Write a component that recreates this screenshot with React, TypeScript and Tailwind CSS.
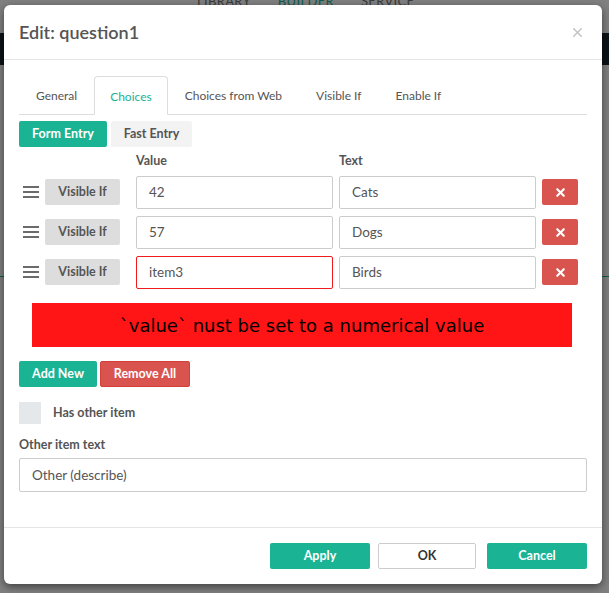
import { X } from 'lucide-react'

const rows = [
  { value: '42', text: 'Cats', error: false },
  { value: '57', text: 'Dogs', error: false },
  { value: 'item3', text: 'Birds', error: true },
]

const tabs = ['General', 'Choices', 'Choices from Web', 'Visible If', 'Enable If']

function Hamburger() {
  return (
    <svg width="16" height="14" viewBox="0 0 16 14" className="shrink-0">
      <rect x="0" y="1" width="16" height="2" fill="#6b6b6b" />
      <rect x="0" y="6" width="16" height="2" fill="#6b6b6b" />
      <rect x="0" y="11" width="16" height="2" fill="#6b6b6b" />
    </svg>
  )
}

export default function App() {
  return (
    <div
      className="relative w-[609px] h-[593px] overflow-hidden bg-[#808080]"
      style={{ fontFamily: 'Lato, "Open Sans", sans-serif' }}
    >
      {/* page behind the overlay */}
      <div className="flex gap-[27px] pl-[197px] -mt-[8px] text-[13px] text-[#3a3a3a] tracking-wide">
        <span>LIBRARY</span>
        <span className="text-[#0d5c4b]">BUILDER</span>
        <span>SERVICE</span>
      </div>
      <div className="mt-[21px] h-[32px] bg-[#0c1216]" />
      <div className="mt-[211px] h-[1px] bg-[#0d5c4b]" />

      {/* modal */}
      <div className="absolute left-[4px] top-[5px] w-[598px] h-[579px] bg-white rounded-[6px] shadow-[0_3px_9px_rgba(0,0,0,0.5)] flex flex-col">
        <div className="h-[55px] border-b border-[#e5e5e5] flex items-center justify-between pl-[15px] pr-[17px]">
          <h1 className="text-[18px] font-semibold text-[#555]">Edit: question1</h1>
          <X size={15} strokeWidth={2.5} className="text-[#c4c4c4]" />
        </div>

        <div className="px-[15px] flex-1">
          <div className="mt-[16px] flex border-b border-[#ddd] h-[39px] text-[12px] text-[#555]">
            {tabs.map((t) =>
              t === 'Choices' ? (
                <div
                  key={t}
                  className="px-[15px] pt-[2px] flex items-center border border-[#ddd] border-b-white -mb-px rounded-t-[4px] bg-white text-[#1ab394]"
                >
                  {t}
                </div>
              ) : (
                <div key={t} className="px-[17px] pt-[2px] flex items-center">
                  {t}
                </div>
              )
            )}
          </div>

          <div className="mt-[6px] flex gap-[4px]">
            <button className="h-[26px] w-[88px] bg-[#1ab394] text-white text-[12.5px] font-bold rounded-[2px]">
              Form Entry
            </button>
            <button className="h-[26px] w-[81px] bg-[#f3f3f3] text-[#555] text-[12.5px] font-bold rounded-[2px]">
              Fast Entry
            </button>
          </div>

          <div className="mt-[6px] flex text-[12.5px] font-bold text-[#555] h-[16px] items-center">
            <span className="ml-[117px] w-[203px]">Value</span>
            <span>Text</span>
          </div>

          <div className="mt-[7px] flex flex-col gap-[8px]">
            {rows.map((r) => (
              <div key={r.value} className="flex items-center h-[32px]">
                <div className="ml-[4px] mr-[6px]">
                  <Hamburger />
                </div>
                <button className="h-[26px] w-[75px] bg-[#dddddd] text-[#555] text-[12.5px] font-bold rounded-[2px]">
                  Visible If
                </button>
                <div
                  className={`ml-[16px] w-[197px] h-[33px] flex items-center px-[12px] text-[13.5px] text-[#555] border rounded-[2px] ${
                    r.error ? 'border-[#ee1c1c]' : 'border-[#ccc]'
                  }`}
                >
                  {r.value}
                </div>
                <div className="ml-[6px] w-[197px] h-[33px] flex items-center px-[12px] text-[13.5px] text-[#555] border border-[#ccc] rounded-[2px]">
                  {r.text}
                </div>
                <button className="ml-[6px] w-[36px] h-[26px] bg-[#d9534f] rounded-[2px] flex items-center justify-center">
                  <X size={13} strokeWidth={4} className="text-white" />
                </button>
              </div>
            ))}
          </div>

          <div
            className="mt-[15px] ml-[13px] mr-[15px] h-[44px] bg-[#ff1515] flex items-center justify-center text-[18px] text-black"
            style={{ fontFamily: '"DejaVu Sans", sans-serif' }}
          >
            `value` nust be set to a numerical value
          </div>

          <div className="mt-[14px] flex gap-[3px]">
            <button className="h-[26px] w-[78px] bg-[#1ab394] text-white text-[12.5px] font-bold rounded-[2px]">
              Add New
            </button>
            <button className="h-[26px] w-[90px] bg-[#d9534f] border border-[#d43f3a] text-white text-[12.5px] font-bold rounded-[2px]">
              Remove All
            </button>
          </div>

          <div className="mt-[15px] flex items-center">
            <div className="w-[22px] h-[22px] bg-[#e5e8eb]" />
            <span className="ml-[12px] text-[12.5px] font-bold text-[#555]">Has other item</span>
          </div>

          <div className="mt-[12px] text-[12.5px] font-bold text-[#555]">Other item text</div>
          <div className="mt-[3px] h-[34px] border border-[#ccc] rounded-[2px] flex items-center px-[12px] text-[13.5px] text-[#555]">
            Other (describe)
          </div>
        </div>

        <div className="h-[57px] border-t border-[#e5e5e5] flex items-center justify-end gap-[8px] pr-[15px]">
          <button className="w-[100px] h-[26px] bg-[#1ab394] text-white text-[12.5px] font-bold rounded-[2px]">
            Apply
          </button>
          <button className="w-[98px] h-[26px] bg-white border border-[#ccc] text-[#333] text-[12.5px] font-bold rounded-[2px]">
            OK
          </button>
          <button className="ml-[3px] w-[100px] h-[26px] bg-[#1ab394] text-white text-[12.5px] font-bold rounded-[2px]">
            Cancel
          </button>
        </div>
      </div>
    </div>
  )
}
